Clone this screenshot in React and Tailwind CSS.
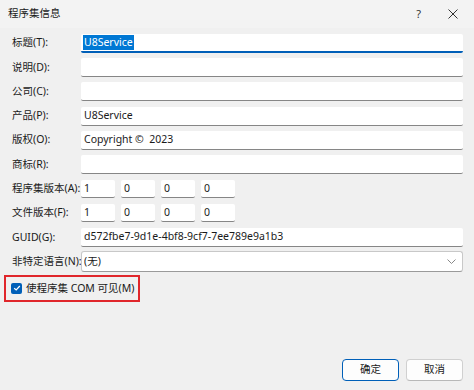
const FONT = { fontFamily: '"Noto Sans", "Noto Sans CJK SC", sans-serif' };

const TextRow = ({ label, value, focused }) => (
  <div className="flex items-center h-[24.3px]">
    <div className="w-[81px] pl-[12px] text-[10.5px] text-[#1a1a1a] whitespace-nowrap">{label}</div>
    <div
      className={`flex-1 h-[19px] bg-white flex items-center pl-[2px] text-[10.5px] text-[#1a1a1a] rounded-[2px] whitespace-pre ${
        focused ? 'border-b-2 border-b-[#005fb8]' : 'border-b border-b-[#868686]'
      }`}
    >
      {focused ? (
        <span className="bg-[#0078d4] text-white px-[1px] leading-[15px]">{value}</span>
      ) : (
        <span className="pl-[1px]">{value}</span>
      )}
    </div>
  </div>
);

const VersionRow = ({ label, parts }) => (
  <div className="flex items-center h-[24.3px]">
    <div className="w-[81px] pl-[12px] text-[10.5px] text-[#1a1a1a] whitespace-nowrap">{label}</div>
    <div className="flex gap-[6px]">
      {parts.map((p, i) => (
        <div
          key={i}
          className="w-[34px] h-[18px] bg-white border-b border-b-[#868686] rounded-[2px] flex items-center pl-[3px] text-[10.5px] text-[#1a1a1a]"
        >
          {p}
        </div>
      ))}
    </div>
  </div>
);

export default function App() {
  return (
    <div className="w-[474px] h-[390px] bg-[#f0f0f0] flex flex-col overflow-hidden" style={FONT}>
      <div className="h-[28px] bg-[#f3f3f3] flex items-center justify-between pl-[8px] pr-[14px] shrink-0">
        <span className="text-[10.5px] text-[#1a1a1a]">程序集信息</span>
        <div className="flex items-center gap-[27px] text-[#333]">
          <span className="text-[11px]">?</span>
          <svg width="10" height="10" viewBox="0 0 10 10" className="mr-[2px]">
            <path d="M0.5 0.5L9.5 9.5M9.5 0.5L0.5 9.5" stroke="#333" strokeWidth="1" />
          </svg>
        </div>
      </div>

      <div className="flex-1 flex flex-col pt-[3px] pr-[11px]">
        <TextRow label="标题(T):" value="U8Service" focused />
        <TextRow label="说明(D):" value="" />
        <TextRow label="公司(C):" value="" />
        <TextRow label="产品(P):" value="U8Service" />
        <TextRow label="版权(O):" value="Copyright ©  2023" />
        <TextRow label="商标(R):" value="" />
        <VersionRow label="程序集版本(A):" parts={['1', '0', '0', '0']} />
        <VersionRow label="文件版本(F):" parts={['1', '0', '0', '0']} />
        <TextRow label="GUID(G):" value="d572fbe7-9d1e-4bf8-9cf7-7ee789e9a1b3" />
        <div className="flex items-center h-[24.3px]">
          <div className="w-[81px] pl-[12px] text-[10.5px] text-[#1a1a1a] whitespace-nowrap">非特定语言(N):</div>
          <div className="flex-1 h-[21px] bg-white border border-[#c8c8c8] border-b-[#9a9a9a] rounded-[3px] flex items-center justify-between pl-[2px] pr-[6px] text-[10.5px] text-[#1a1a1a]">
            <span>(无)</span>
            <svg width="9" height="5" viewBox="0 0 9 5">
              <path d="M0.5 0.5L4.5 4.5L8.5 0.5" fill="none" stroke="#888" strokeWidth="1" />
            </svg>
          </div>
        </div>

        <div className="mt-[1px] ml-[4px] w-[136px] h-[27px] border-2 border-[#e0262b] flex items-center pl-[5px] gap-[4px]">
          <div className="w-[11px] h-[11px] rounded-[2px] bg-[#005fb8] flex items-center justify-center">
            <svg width="8" height="8" viewBox="0 0 8 8">
              <path d="M1.2 4.2L3.2 6L6.8 2" fill="none" stroke="white" strokeWidth="1.2" />
            </svg>
          </div>
          <span className="text-[10.5px] text-[#1a1a1a] whitespace-nowrap">使程序集 COM 可见(M)</span>
        </div>

        <div className="flex-1" />

        <div className="flex justify-end gap-[7px] mb-[9px]">
          <button className="w-[57px] h-[22px] bg-[#fdfdfd] border border-[#005fb8] rounded-[4px] text-[10.5px] text-[#1a1a1a]">
            确定
          </button>
          <button className="w-[57px] h-[22px] bg-[#fdfdfd] border border-[#d0d0d0] border-b-[#b8b8b8] rounded-[4px] text-[10.5px] text-[#1a1a1a]">
            取消
          </button>
        </div>
      </div>
    </div>
  );
}
